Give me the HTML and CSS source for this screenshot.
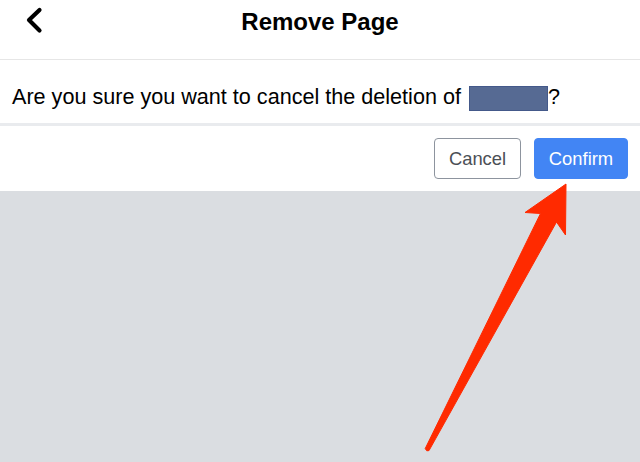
FILE: index.html
```html
<!DOCTYPE html>
<html lang="en">
<head>
<meta charset="utf-8">
<title>Remove Page</title>
<link rel="stylesheet" href="styles.css">
</head>
<body>
<div class="screen">
  <header class="topbar">
    <div class="back">
      <svg width="20" height="28" viewBox="0 0 20 28" aria-hidden="true">
        <polyline points="14.5,3 4,13 14.5,23.5" fill="none" stroke="#000" stroke-width="4.2" stroke-linecap="round" stroke-linejoin="round"/>
      </svg>
    </div>
    <h1 class="title">Remove Page</h1>
    <div></div>
  </header>
  <section class="message">
    <p>Are you sure you want to cancel the deletion of <span class="redact"></span>?</p>
  </section>
  <div class="actions">
    <button class="btn btn-cancel">Cancel</button>
    <button class="btn btn-confirm">Confirm</button>
  </div>
  <div class="backdrop"></div>
  <svg class="arrow" width="640" height="462" viewBox="0 0 640 462" aria-hidden="true">
    <path d="M566,184 L525,212.5 L540.5,213.5 L425.2,448.6 Q426.5,452 429,450.6 L556.5,222 L565.5,235 Z" fill="#ff2a00" stroke="#ff2a00" stroke-width="1" stroke-linejoin="round"/>
  </svg>
</div>
</body>
</html>
```

FILE: styles.css
```css
html, body {
  margin: 0;
  padding: 0;
  background: #dadde1;
}

.screen {
  position: relative;
  width: 640px;
  height: 462px;
  display: flex;
  flex-direction: column;
  font-family: "Liberation Sans", Arial, sans-serif;
  overflow: hidden;
}

.topbar {
  height: 59px;
  border-bottom: 1px solid #e6e6e6;
  background: #fff;
  display: grid;
  grid-template-columns: 1fr auto 1fr;
  align-items: start;
  box-sizing: content-box;
}

.back {
  padding-left: 25px;
  padding-top: 7px;
  height: 28px;
}

.back svg {
  display: block;
}

.title {
  margin: 0;
  padding-top: 7px;
  font-size: 24px;
  line-height: 30px;
  font-weight: bold;
  color: #000;
}

.message {
  background: #fff;
  padding: 24.5px 12px 12.5px;
  border-bottom: 3px solid #e9ebee;
}

.message p {
  margin: 0;
  font-size: 21.6px;
  line-height: 24px;
  color: #000;
  white-space: nowrap;
}

.redact {
  display: inline-block;
  width: 77px;
  height: 23px;
  margin-left: 2px;
  background: #566a93;
  border: 0.5px solid #44598a;
  vertical-align: -7px;
}

.actions {
  background: #fff;
  height: 65px;
  padding: 12px 12px 0;
  box-sizing: border-box;
  display: flex;
  justify-content: flex-end;
  align-items: flex-start;
  gap: 13px;
}

.btn {
  height: 41px;
  border-radius: 4px;
  font-family: "Liberation Sans", Arial, sans-serif;
  font-size: 18.4px;
  padding: 0;
  box-sizing: border-box;
}

.btn-cancel {
  width: 87px;
  background: #fff;
  border: 1.5px solid #8d949e;
  color: #4b4f56;
}

.btn-confirm {
  width: 94px;
  background: #4285f4;
  border: 1px solid #4285f4;
  color: #fff;
}

.backdrop {
  flex: 1;
  background: #dadde1;
}

.arrow {
  position: absolute;
  left: 0;
  top: 0;
  pointer-events: none;
}
```
